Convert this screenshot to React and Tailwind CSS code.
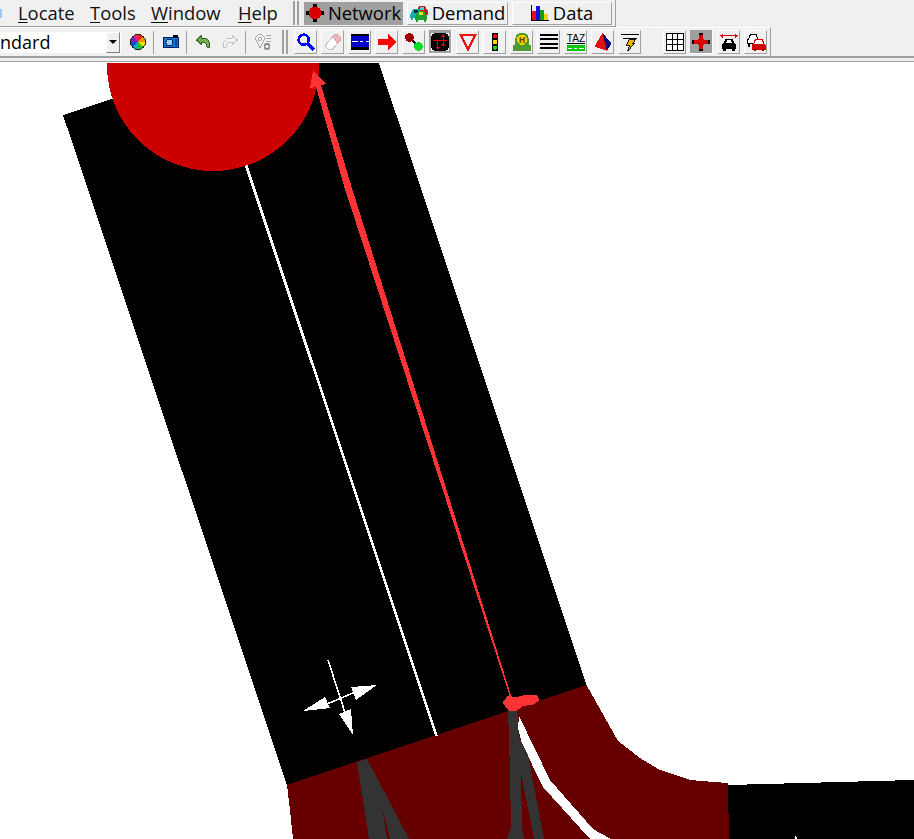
const FONT = "font-['Open_Sans','Noto_Sans',sans-serif]";

const Ico = ({ children, w = 16, h = 16 }) => (
  <svg width={w} height={h} viewBox={`0 0 ${w} ${h}`} className="block shrink-0 overflow-visible" shapeRendering="crispEdges">
    {children}
  </svg>
);

const Magnifier = () => (
  <Ico>
    <circle cx="6" cy="6" r="4.5" fill="none" stroke="#0000ff" strokeWidth="2.4" />
    <path d="M9.5 9.5 L15 15" stroke="#0000ff" strokeWidth="3" />
  </Ico>
);

const Eraser = () => (
  <Ico>
    <path d="M1 11 L9 2 L11 1 L15 4 L15 6 L7 15 L4 15 Z" fill="#fff" stroke="#c4c4c4" />
    <path d="M8 3 L11 1 L15 4 L15 6 L12 9 Z" fill="#f4b4bc" stroke="#d8a4aa" />
  </Ico>
);

const RoadIcon = () => (
  <Ico>
    <rect x="0" y="1" width="16" height="14" fill="#000" />
    <rect x="0" y="3" width="16" height="9" fill="#0000c8" />
    <path d="M1 7.5 H6 M8 7.5 H11 M13 7.5 H16" stroke="#fff" />
  </Ico>
);

const RedArrow = () => (
  <Ico>
    <path d="M0 5 H9 V1 L16 8 L9 15 V11 H0 Z" fill="#ff0000" />
  </Ico>
);

const NodeIcon = () => (
  <Ico>
    <path d="M4 4 L12 12" stroke="#000" strokeWidth="2.5" />
    <circle cx="4" cy="4" r="4" fill="#a00000" />
    <circle cx="12" cy="12" r="4" fill="#00e020" />
  </Ico>
);

const Intersection = () => (
  <Ico w={17} h={17}>
    <rect x="0" y="0" width="17" height="17" fill="#000" />
    <path d="M0 0 H3 V1 H1 V3 H0 Z M14 0 H17 V3 H16 V1 H14 Z M0 14 H1 V16 H3 V17 H0 Z M14 16 H16 V14 H17 V17 H14 Z" fill="#fff" />
    <path d="M2 7 H15 V8 H2 Z M6 8 H7 V14 H6 Z M11 3 H12 V11 H11 Z" fill="#e80000" />
    <path d="M4 13 H9 L6.5 16 Z M9 4 H14 L11.5 1 Z M9 10 H14 L11.5 13 Z" fill="#e80000" />
  </Ico>
);

const Yield = () => (
  <Ico>
    <path d="M1.5 2 H14.5 L8 14.5 Z" fill="none" stroke="#ee1111" strokeWidth="2" />
  </Ico>
);

const Signal = () => (
  <Ico>
    <rect x="5" y="0" width="6" height="16" fill="#000" />
    <circle cx="8" cy="3" r="2" fill="#ff0000" />
    <circle cx="8" cy="8" r="2" fill="#ffd800" />
    <circle cx="8" cy="13" r="2" fill="#00e000" />
  </Ico>
);

const BusStop = () => (
  <Ico>
    <path d="M0 16 V11 H2 V6 Q2 0 8 0 Q14 0 14 6 V11 H16 V16 Z" fill="#4d9a2f" />
    <circle cx="8" cy="6" r="4.5" fill="#f4d300" />
    <text x="8" y="8.6" textAnchor="middle" fontSize="7.5" fontWeight="700" fontFamily="Liberation Sans" fill="#5a4000">H</text>
  </Ico>
);

const Lanes = () => (
  <Ico>
    <path d="M0 1.5 H16 M0 5.5 H16 M0 9.5 H16 M0 13.5 H16" stroke="#000" strokeWidth="2" />
  </Ico>
);

const Taz = () => (
  <Ico>
    <text x="8" y="8" textAnchor="middle" fontSize="9" fontFamily="Liberation Sans" fill="#000">TAZ</text>
    <path d="M0 9.5 H16" stroke="#000" />
    <rect x="0" y="11" width="16" height="5" fill="#00c800" />
    <path d="M1 13.5 H4 M6 13.5 H9 M11 13.5 H15" stroke="#fff" />
  </Ico>
);

const Triangle = () => (
  <Ico w={15}>
    <path d="M0 12 L7 0 L11 16 Z" fill="#e01010" />
    <path d="M7 0 L15 9 L11 16 Z" fill="#0a0a70" />
  </Ico>
);

const Bolt = () => (
  <Ico>
    <path d="M0 1.5 H16 M2 4.5 H14" stroke="#000" />
    <path d="M7 6 H13 L10 9.5 H12 L6 16 L7.5 11 H4.5 Z" fill="#f4b400" stroke="#000" strokeWidth="0.8" />
  </Ico>
);

const GridIcon = () => (
  <Ico>
    <path d="M.5 .5 H15.5 V15.5 H.5 Z" fill="#fff" stroke="#000" />
    <path d="M5.5 0 V16 M10.5 0 V16 M0 5.5 H16 M0 10.5 H16" stroke="#000" />
  </Ico>
);

const Cross = () => (
  <Ico>
    <path d="M6 0 H10 V3 H6 Z M6 13 H10 V16 H6 Z M0 6 H3 V10 H0 Z M13 6 H16 V10 H13 Z" fill="#000" />
    <path d="M6 2 H10 V5 L11 6 H14 V10 H11 L10 11 V14 H6 V11 L5 10 H2 V6 H5 L6 5 Z" fill="#d80000" />
  </Ico>
);

const CarShape = ({ x = 0, y = 0, fill = "#000", win = "#fff" }) => (
  <g transform={`translate(${x} ${y})`}>
    <path d="M1 5 L3 1 H9 L11 5 L12 6 V10 H0 V6 Z" fill={fill} />
    <path d="M3.5 5 L4.5 2 H7.5 L8.5 5 Z" fill={win} />
    <rect x="1" y="10" width="2" height="2" fill={fill} />
    <rect x="9" y="10" width="2" height="2" fill={fill} />
  </g>
);

// back car of the pair: only an outline, no solid body
const OutlineCar = ({ x = 0, y = 0, color = "#000" }) => (
  <g transform={`translate(${x} ${y})`}>
    <path d="M1.5 5 L3 1.5 H8 L9.5 5 L10.5 6 V9.5 H.5 V6 Z" fill="#fff" stroke={color} />
    <rect x="1" y="10" width="2" height="2" fill={color} />
  </g>
);

const CarWidth = () => (
  <Ico>
    <path d="M1 2.5 H15" stroke="#d00000" />
    <path d="M0 2.5 L3 0 V5 Z M16 2.5 L13 0 V5 Z" fill="#d00000" />
    <CarShape x={2} y={4} />
  </Ico>
);

const TwoCars = () => (
  <Ico>
    <OutlineCar x={0} y={0} />
    <g transform="translate(5 5)">
      <path d="M1 4.5 L2.5 .5 H8.5 L10 4.5 L11 5.5 V9.5 H0 V5.5 Z" fill="#fff" stroke="#d80000" />
      <path d="M0 5 H11 V9 H0 Z" fill="#d80000" />
      <rect x="1" y="9" width="2" height="2" fill="#800000" />
      <rect x="8" y="9" width="2" height="2" fill="#800000" />
    </g>
  </Ico>
);

const ColorWheel = () => {
  const colors = ["#ff2020", "#ff9000", "#ffe000", "#30c030", "#00b0b0", "#1040e0", "#8020c0", "#e02090"];
  return (
    <Ico>
      {colors.map((c, i) => {
        const a0 = ((i - 2) * Math.PI) / 4;
        const a1 = ((i - 1) * Math.PI) / 4;
        return (
          <path
            key={c}
            d={`M8 8 L${8 + 8 * Math.cos(a0)} ${8 + 8 * Math.sin(a0)} A8 8 0 0 1 ${8 + 8 * Math.cos(a1)} ${8 + 8 * Math.sin(a1)} Z`}
            fill={c}
          />
        );
      })}
      <circle cx="8" cy="8" r="7.5" fill="none" stroke="#222" />
    </Ico>
  );
};

const Camera = () => (
  <Ico>
    <path d="M10 1 H15 V3 H10 Z" fill="#000" />
    <rect x="0.5" y="3.5" width="15" height="10" fill="#0a78d0" stroke="#001a60" />
    <circle cx="6.5" cy="8.5" r="3.5" fill="#8fd8f8" stroke="#001a60" />
    <rect x="12" y="5" width="2" height="7" fill="#004a90" />
  </Ico>
);

const Undo = () => (
  <Ico>
    <path d="M0.5 6 L6 1 V4 H9 Q15 5 15 13 L12 13 Q12 9 8 8 H6 V11 Z" fill="#70b050" stroke="#20401a" strokeWidth="0.8" />
  </Ico>
);

const Redo = () => (
  <Ico>
    <path d="M15.5 6 L10 1 V4 H7 Q1 5 1 13 L4 13 Q4 9 8 8 H10 V11 Z" fill="#f2f2f2" stroke="#b8b8b8" strokeWidth="0.9" />
  </Ico>
);

const PinGear = () => (
  <Ico>
    <path d="M5 14 L1.5 7 A4.2 4.2 0 1 1 8.5 7 Z" fill="none" stroke="#a8a8a8" />
    <circle cx="5" cy="5" r="1.5" fill="none" stroke="#a8a8a8" />
    <path d="M11 1.5 H16 M11 4.5 H16 M11 7.5 H16" stroke="#a8a8a8" />
    <circle cx="12" cy="12.5" r="2.6" fill="none" stroke="#909090" strokeWidth="1.6" />
  </Ico>
);

const NetworkIcon = () => (
  <Ico w={18} h={18}>
    <path d="M7 0 H11 V3 H7 Z M7 15 H11 V18 H7 Z M0 7 H3 V11 H0 Z M15 7 H18 V11 H15 Z" fill="#000" />
    <circle cx="9" cy="9" r="6.5" fill="#d80000" />
  </Ico>
);

const DemandIcon = () => (
  <Ico w={18} h={18}>
    <CarShape x={6} y={1} fill="#c02020" win="#40d0d0" />
    <CarShape x={0} y={4} fill="#10b0b0" win="#003030" />
    <CarShape x={5} y={6} fill="#20a030" win="#f0e020" />
  </Ico>
);

const DataIcon = () => (
  <Ico w={18} h={16}>
    <rect x="1" y="6" width="4" height="9" fill="#e01010" />
    <rect x="5" y="1" width="4" height="14" fill="#1010e0" />
    <rect x="9" y="5" width="4" height="10" fill="#10a010" />
    <rect x="13" y="9" width="4" height="6" fill="#f0d000" />
    <path d="M0.5 0 V15.5 H18" stroke="#000" fill="none" />
  </Ico>
);

const Gripper = ({ className = "" }) => (
  <div className={`flex gap-[2px] ${className}`}>
    <div className="h-full w-[2px] border-x border-x-[#a0a0a0] bg-white" />
    <div className="h-full w-[2px] border-x border-x-[#a0a0a0] bg-white" />
  </div>
);

const Sep = ({ className = "" }) => <div className={`h-[23px] w-px bg-[#a0a0a0] ${className}`} />;

const Flat = ({ children, className = "" }) => (
  <div className={`flex h-[23px] w-[23px] items-center justify-center ${className}`}>{children}</div>
);

const ToolBtn = ({ children, active }) => (
  <div
    className={
      active
        ? "flex h-[24px] w-[23px] items-center justify-center border-r border-b border-r-white border-b-white bg-[#a0a0a0] [&_svg]:h-[18px] [&_svg]:w-[18px]"
        : "flex h-[24px] w-[23px] items-center justify-center border border-t-white border-l-white border-r-[#a0a0a0] border-b-[#a0a0a0] [&_svg]:h-[18px] [&_svg]:w-[18px]"
    }
  >
    {children}
  </div>
);

const TabBtn = ({ icon, label, className }) => (
  <div className={`flex h-[23px] items-center justify-center gap-[4px] ${className}`}>
    {icon}
    <span className="text-[18.4px] leading-none text-black">{label}</span>
  </div>
);

const MenuItem = ({ u, rest, className }) => (
  <div className={`text-[18.4px] leading-none text-[#111] ${className}`}>
    <u className="underline-offset-2">{u}</u>
    {rest}
  </div>
);

const mainTools = [
  [Magnifier],
  [Eraser],
  [RoadIcon],
  [RedArrow],
  [NodeIcon],
  [Intersection, true],
  [Yield],
  [Signal],
  [BusStop],
  [Lanes],
  [Taz],
  [Triangle],
  [Bolt],
];

const viewTools = [[GridIcon], [Cross, true], [CarWidth], [TwoCars]];

const Scene = () => (
  <svg width="914" height="776" viewBox="0 63 914 776" className="block" shapeRendering="crispEdges">
    <polygon points="63,115 220,63 379,63 586.5,685 287,785" fill="#000" />
    <polygon
      points="287,785 586.5,685 618,741 640,758 660,770 690,780 714,782 728,783 729,839 293,839 290,810"
      fill="#660000"
    />
    <polygon points="728,785 914,780 914,839 729,839" fill="#000" />
    <polygon points="795,836 797,838 797,839 795,839" fill="#fff" />

    <line x1="240" y1="147" x2="436.5" y2="736" stroke="#fff" strokeWidth="2.6" />
    <circle cx="213" cy="65" r="106" fill="#cc0000" />

    <polygon
      points="519,716 550,780 593,829 600,833 611,839 590,839 543,787 522,744 518,728"
      fill="#fff"
    />
    <polygon points="357,762 367,759 409,839 390,839 382,807 387,839 369,839" fill="#333333" />
    <polygon
      points="508,710 517,710 519,737 528,755 544,839 534,839 521,773 522,828 524,839 507,839 511,828 510,773 509,740"
      fill="#333333"
    />

    <polygon
      points="313,71 326,84 321,85 351,185 511.5,697 510,697 344,186 316,87 310,88"
      fill="#ff3333"
    />
    <polygon
      points="503,703 508,696 515,698 527,695 537,696 539,700 533,704 522,706 517,710 510,711"
      fill="#ff3333"
      stroke="#ff3333"
    />

    <line x1="328" y1="660" x2="349" y2="725" stroke="#fff" strokeWidth="1.6" />
    <line x1="327" y1="704" x2="353" y2="693" stroke="#fff" strokeWidth="1.6" />
    <polygon points="339,714 351,709 353,735" fill="#fff" />
    <polygon points="303,711 325,697 330,708" fill="#fff" />
    <polygon points="377,685 351,687 356,700" fill="#fff" />
  </svg>
);

export default function App() {
  return (
    <div className={`flex h-[839px] w-[914px] flex-col overflow-hidden bg-white ${FONT}`}>
      <div className="flex h-[63px] shrink-0 flex-col bg-[#f0f0f0]">
        <div className="flex h-[27px] w-[616px] items-center border-r border-b border-[#a0a0a0]">
          <div className="h-[9px] w-[2px] bg-[#9cc8f0]" />
          <MenuItem u="L" rest="ocate" className="ml-[16px] w-[72px]" />
          <MenuItem u="T" rest="ools" className="w-[61px]" />
          <MenuItem u="W" rest="indow" className="w-[87px]" />
          <MenuItem u="H" rest="elp" className="w-[55px]" />
          <Gripper className="h-[24px]" />
          <TabBtn
            icon={<NetworkIcon />}
            label="Network"
            className="ml-[5px] w-[99px] bg-[#a0a0a0]"
          />
          <TabBtn
            icon={<DemandIcon />}
            label="Demand"
            className="ml-[4px] w-[101px] border border-t-white border-l-white border-r-[#a0a0a0] border-b-[#a0a0a0]"
          />
          <TabBtn
            icon={<DataIcon />}
            label="Data"
            className="ml-[4px] w-[100px] border border-t-white border-l-white border-r-[#a0a0a0] border-b-[#a0a0a0]"
          />
        </div>

        <div className="flex h-[29px] w-[771px] items-center border-t border-r border-t-white border-r-[#a0a0a0]">
          <div className="flex h-[21px] w-[121px] items-center justify-between bg-white pr-px">
            <span className="text-[18px] leading-none text-black">ndard</span>
            <div className="flex h-[21px] w-[14px] items-center justify-center border border-t-white border-l-white border-r-[#808080] border-b-[#808080] bg-[#f0f0f0]">
              <div className="h-0 w-0 border-x-[4px] border-t-[4px] border-x-transparent border-t-black" />
            </div>
          </div>
          <Flat className="ml-[5px]">
            <ColorWheel />
          </Flat>
          <Sep className="ml-[4px]" />
          <Flat className="ml-[5px]">
            <Camera />
          </Flat>
          <Sep className="ml-[4px]" />
          <Flat className="ml-[4px]">
            <Undo />
          </Flat>
          <Flat className="ml-[4px]">
            <Redo />
          </Flat>
          <Sep className="ml-[4px]" />
          <Flat className="ml-[5px]">
            <PinGear />
          </Flat>
          <Gripper className="ml-[8px] h-[24px]" />
          <div className="ml-[6px] flex gap-[4px]">
            {mainTools.map(([Icon, active], i) => (
              <ToolBtn key={i} active={active}>
                <Icon />
              </ToolBtn>
            ))}
          </div>
          <div className="ml-[22px] flex gap-[4px]">
            {viewTools.map(([Icon, active], i) => (
              <ToolBtn key={i} active={active}>
                <Icon />
              </ToolBtn>
            ))}
          </div>
        </div>

        <div className="h-[2px] w-full bg-[#a0a0a0]" />
        <div className="h-[3px]" />
        <div className="h-px w-full bg-[#a0a0a0]" />
        <div className="h-px w-full bg-white" />
      </div>
      <Scene />
    </div>
  );
}
